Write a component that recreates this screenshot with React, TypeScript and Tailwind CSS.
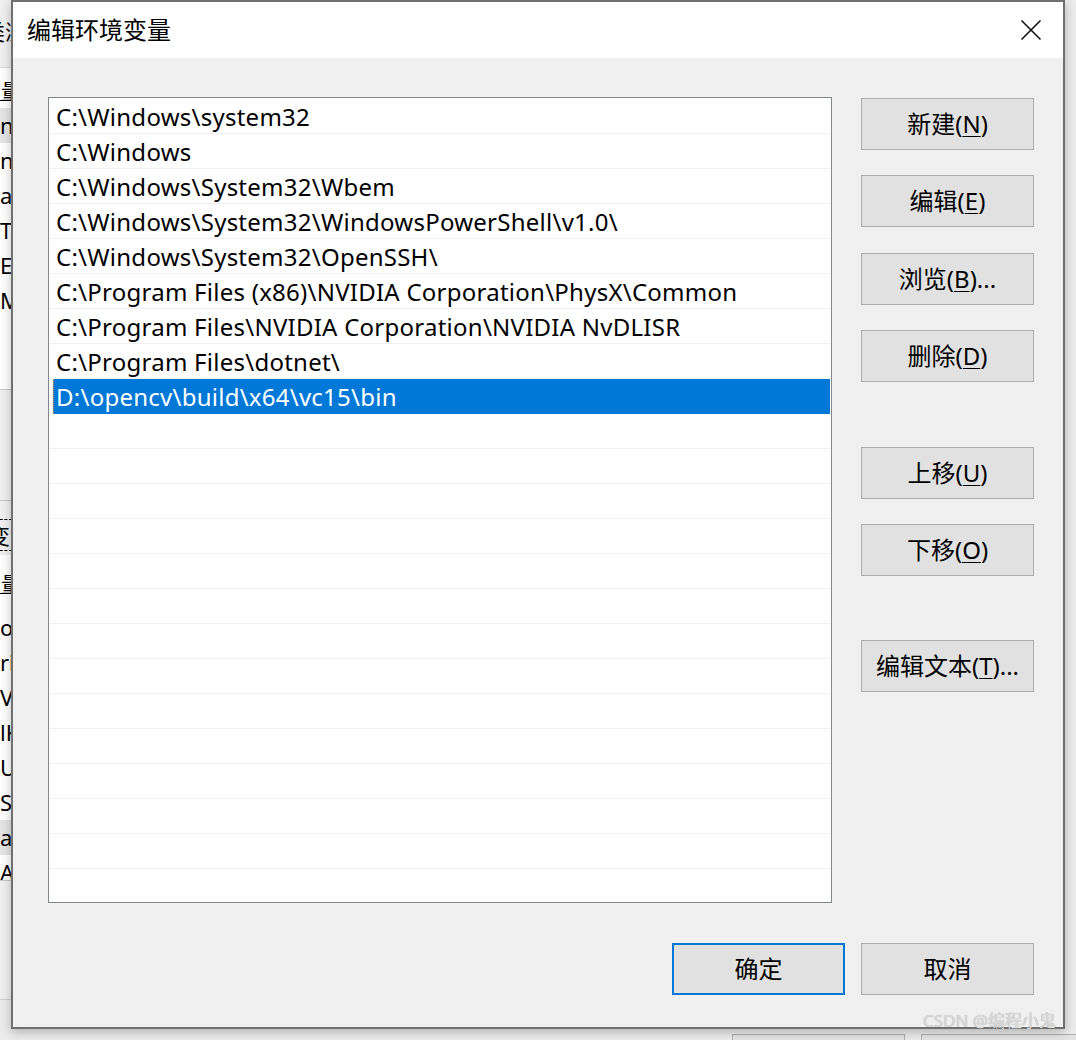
import React from "react";

const paths = [
  "C:\\Windows\\system32",
  "C:\\Windows",
  "C:\\Windows\\System32\\Wbem",
  "C:\\Windows\\System32\\WindowsPowerShell\\v1.0\\",
  "C:\\Windows\\System32\\OpenSSH\\",
  "C:\\Program Files (x86)\\NVIDIA Corporation\\PhysX\\Common",
  "C:\\Program Files\\NVIDIA Corporation\\NVIDIA NvDLISR",
  "C:\\Program Files\\dotnet\\",
  "D:\\opencv\\build\\x64\\vc15\\bin",
];

const TOTAL_ROWS = 23;

function Btn({
  label,
  mn,
  suffix = "",
  className = "",
  def = false,
}: {
  label: string;
  mn?: string;
  suffix?: string;
  className?: string;
  def?: boolean;
}) {
  return (
    <div
      className={
        "w-[173px] h-[52px] flex items-center justify-center bg-[#e1e1e1] text-[24px] text-black " +
        (def ? "border-2 border-[#0078d7] " : "border border-[#adadad] ") +
        className
      }
    >
      <span>
        {label}
        {mn ? (
          <>
            (<span className="underline underline-offset-[3px] decoration-1">{mn}</span>)
          </>
        ) : null}
        {suffix}
      </span>
    </div>
  );
}

function StripRow({ t, hl = false }: { t: string; hl?: boolean }) {
  return (
    <div className={"h-[35px] shrink-0 leading-[35px] whitespace-nowrap " + (hl ? "bg-[#e5e5e5]" : "")}>{t}</div>
  );
}

function LeftStrip() {
  return (
    <div className="w-[11px] shrink-0 h-[1040px] overflow-hidden flex flex-col text-[22px] text-black">
      <div className="h-[67px] shrink-0 bg-[#f0f0f0] pt-[16px] whitespace-nowrap">
        <div className="ml-[-17px] leading-[30px]">类浏</div>
      </div>
      <div className="h-[322px] shrink-0 bg-white border-t border-[#d9d9d9] flex flex-col">
        <div className="h-[40px] shrink-0 pt-[6px] whitespace-nowrap">
          <span className="ml-[-20px] text-[21px] leading-[28px] underline decoration-1">变量</span>
        </div>
        <StripRow t="n" hl />
        <StripRow t="n" />
        <StripRow t="at" />
        <StripRow t="T5" />
        <StripRow t="EN" />
        <StripRow t="M" />
      </div>
      <div className="h-[111px] shrink-0 bg-[#f0f0f0] border-t border-[#c8c8c8]" />
      <div className="h-[55px] shrink-0 bg-[#f0f0f0] border-t border-[#c8c8c8] pt-[18px] whitespace-nowrap">
        <span className="ml-[-14px] inline-block leading-[30px] border border-dashed border-black px-[1px]">变</span>
      </div>
      <div className="h-[325px] shrink-0 bg-white flex flex-col">
        <div className="h-[55px] shrink-0 pt-[12px] whitespace-nowrap">
          <span className="ml-[-20px] text-[21px] leading-[28px] underline decoration-1">变量</span>
        </div>
        <StripRow t="o" />
        <StripRow t="ri" />
        <StripRow t="V" />
        <StripRow t="lK" />
        <StripRow t="U" />
        <StripRow t="S" />
        <StripRow t="at" hl />
        <StripRow t="A" />
      </div>
      <div className="h-[119px] shrink-0 bg-[#f0f0f0] border-t border-[#c8c8c8]" />
      <div className="flex-1 bg-[#ececec] border-t border-[#d0d0d0]" />
    </div>
  );
}

function RightStrip() {
  return (
    <div className="w-[11px] shrink-0 h-[1040px] overflow-hidden flex flex-col bg-gradient-to-r from-[#d4d4d4] to-[#ececec]">
      <div className="h-[33px] shrink-0" />
      <div className="h-[35px] shrink-0 border-t border-[#c4c4c4]" />
      <div className="h-[321px] shrink-0 border-t border-[#7a7e88] pl-[3px] pt-[2px]">
        <div className="w-[2px] h-[40px] bg-[#cfcfcf]" />
      </div>
      <div className="h-[29px] shrink-0 border-t border-[#7a7e88]" />
      <div className="h-[51px] shrink-0 border-t border-[#a8a8a8] bg-[#d2d2d2]" />
      <div className="h-[31px] shrink-0 border-t border-[#a8a8a8]" />
      <div className="h-[68px] shrink-0 border-t border-[#c4c4c4]" />
      <div className="h-[312px] shrink-0 border-t border-[#7a7e88] pl-[4px] pt-[34px]">
        <div className="w-[7px] h-[97px] bg-[#cdcdcd]" />
      </div>
      <div className="h-[28px] shrink-0 border-t border-[#7a7e88]" />
      <div className="h-[62px] shrink-0 border-t border-[#a8a8a8] bg-[#d2d2d2]" />
      <div className="h-[30px] shrink-0 border-t border-[#a8a8a8]" />
      <div className="flex-1 border-t border-[#c4c4c4]" />
    </div>
  );
}

function BackgroundWindow() {
  return (
    <div className="absolute inset-0 bg-[#ececec] flex">
      <LeftStrip />
      <div className="flex-1 flex flex-col">
        <div className="flex-1" />
        <div className="h-[6px] overflow-hidden flex gap-[16px] pl-[721px] bg-[#ececec]">
          <div className="w-[173px] h-[20px] shrink-0 border border-[#b0b0b0] bg-[#e4e4e4]" />
          <div className="w-[173px] h-[20px] shrink-0 border border-[#b0b0b0] bg-[#e4e4e4]" />
        </div>
      </div>
      <RightStrip />
    </div>
  );
}

export default function App() {
  return (
    <div className="relative w-[1076px] h-[1040px] overflow-hidden font-['Noto_Sans','Noto_Sans_CJK_SC',sans-serif]">
      <BackgroundWindow />

      {/* dialog window */}
      <div className="absolute left-[11px] top-0 w-[1054px] h-[1029px] border-2 border-[#707070] bg-[#f0f0f0] flex flex-col shadow-[0_3px_10px_rgba(0,0,0,0.25)]">
        {/* title bar */}
        <div className="h-[56px] shrink-0 bg-white flex items-center justify-between pl-[14px] pr-[21px]">
          <span className="text-[24px] text-black leading-none">编辑环境变量</span>
          <svg width="22" height="22" viewBox="0 0 22 22" className="text-[#111]">
            <path d="M1.5 1.5 L20.5 20.5 M20.5 1.5 L1.5 20.5" stroke="currentColor" strokeWidth="1.6" />
          </svg>
        </div>

        {/* body */}
        <div className="flex-1 flex flex-col pl-[35px] pr-[29px] pt-[39px]">
          <div className="flex gap-[29px]">
            {/* list */}
            <div className="w-[784px] h-[806px] border border-[#828790] bg-white pt-[1px] px-[1px] overflow-hidden">
              {Array.from({ length: TOTAL_ROWS }).map((_, i) => {
                const text = paths[i];
                const selected = i === paths.length - 1;
                return (
                  <div key={i} className="h-[35px] border-b border-[#f0f0f0] flex">
                    {selected ? (
                      <div className="ml-[3px] flex-1 h-[35px] bg-[#0078d7] text-white text-[24px] tracking-[0.25px] leading-[35px] pl-[2px] border-l border-dotted border-[#e08a3c] whitespace-nowrap">
                        {text}
                      </div>
                    ) : (
                      <div className="pl-[6px] pt-[1px] text-[24px] tracking-[0.25px] leading-[34px] text-black whitespace-nowrap">
                        {text ?? ""}
                      </div>
                    )}
                  </div>
                );
              })}
            </div>

            {/* side buttons */}
            <div className="flex flex-col pt-[1px]">
              <Btn label="新建" mn="N" />
              <Btn label="编辑" mn="E" className="mt-[25px]" />
              <Btn label="浏览" mn="B" suffix="..." className="mt-[26px]" />
              <Btn label="删除" mn="D" className="mt-[25px]" />
              <Btn label="上移" mn="U" className="mt-[65px]" />
              <Btn label="下移" mn="O" className="mt-[25px]" />
              <Btn label="编辑文本" mn="T" suffix="..." className="mt-[64px]" />
            </div>
          </div>

          {/* bottom buttons */}
          <div className="flex justify-end gap-[16px] mt-[40px]">
            <Btn label="确定" def />
            <Btn label="取消" />
          </div>
        </div>
      </div>

      {/* watermark */}
      <div className="absolute left-[923px] top-[1009px] text-[17px] leading-[24px] text-[#dadada] [text-shadow:0_0_1px_rgba(110,110,110,0.55)] whitespace-nowrap">
        CSDN @编程小鬼
      </div>
    </div>
  );
}
